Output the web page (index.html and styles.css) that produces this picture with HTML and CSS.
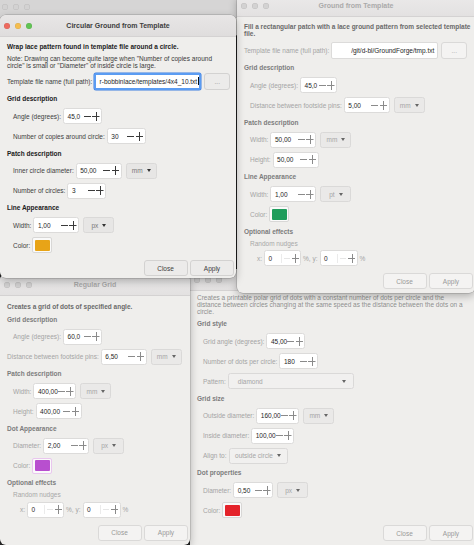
FILE: index.html
```html
<!DOCTYPE html>
<html lang="en">
<head>
    <meta charset="UTF-8">
    <title>Bobbin lace dialogs</title>
    <link rel="stylesheet" href="styles.css">
</head>
<body>

<!-- window far behind, only its title strip shows -->
<div class="win back">
    <div class="tbar"><span class="lights"><i></i><i></i><i></i></span><span></span></div>
</div>

<!-- polar grid -->
<div class="win win-d">
    <div class="tbar"><span class="lights"><i></i><i></i><i></i></span><span>Polar Grid</span></div>
    <div class="body">
        <p class="info">Creates a printable polar grid of dots with a constant number of dots per circle and the<br>distance between circles changing at the same speed as the distance between the dots on a<br>circle.</p>
        <p class="hd">Grid style</p>
        <div class="row"><span class="lbl">Grid angle (degrees):</span><span class="spin w39"><span class="v">45,00</span><i class="pm"></i></span></div>
        <div class="row"><span class="lbl">Number of dots per circle:</span><span class="spin w39"><span class="v">180</span><i class="pm"></i></span></div>
        <div class="row"><span class="lbl">Pattern:</span><span class="dd combo">diamond</span></div>
        <p class="hd">Grid size</p>
        <div class="row"><span class="lbl">Outside diameter:</span><span class="spin w43"><span class="v">160,00</span><i class="pm"></i></span><span class="dd">mm</span></div>
        <div class="row"><span class="lbl">Inside diameter:</span><span class="spin w43"><span class="v">100,00</span><i class="pm"></i></span></div>
        <div class="row"><span class="lbl">Align to:</span><span class="dd align">outside circle</span></div>
        <p class="hd">Dot properties</p>
        <div class="row"><span class="lbl">Diameter:</span><span class="spin w40"><span class="v">0,50</span><i class="pm"></i></span><span class="dd">px</span></div>
        <div class="row"><span class="lbl">Color:</span><span class="sw"><i class="red"></i></span></div>
        <div class="foot"><span class="btn">Close</span><span class="btn">Apply</span></div>
    </div>
</div>

<!-- regular grid -->
<div class="win win-c">
    <div class="tbar"><span class="lights"><i></i><i></i><i></i></span><span>Regular Grid</span></div>
    <div class="body">
        <p class="desc">Creates a grid of dots of specified angle.</p>
        <p class="hd">Grid description</p>
        <div class="row"><span class="lbl">Angle (degrees):</span><span class="spin w39"><span class="v">60,0</span><i class="pm"></i></span></div>
        <div class="row flush"><span class="lbl">Distance between footside pins:</span><span class="spin w46"><span class="v">6,50</span><i class="pm"></i></span><span class="dd">mm</span></div>
        <p class="hd">Patch description</p>
        <div class="row"><span class="lbl">Width:</span><span class="spin w43"><span class="v">400,00</span><i class="pm"></i></span><span class="dd">mm</span></div>
        <div class="row"><span class="lbl">Height:</span><span class="spin w46"><span class="v">400,00</span><i class="pm"></i></span></div>
        <p class="hd">Dot Appearance</p>
        <div class="row"><span class="lbl">Diameter:</span><span class="spin w46"><span class="v">2,00</span><i class="pm"></i></span><span class="dd">px</span></div>
        <div class="row"><span class="lbl">Color:</span><span class="sw pink"><i class="purple"></i></span></div>
        <p class="hd">Optional effects</p>
        <p class="sub">Random nudges</p>
        <div class="row nudge"><span class="lbl">x:</span><span class="spin w37"><span class="v">0</span><i class="pm dis"></i></span><span class="lbl">%, y:</span><span class="spin w38"><span class="v">0</span><i class="pm dis"></i></span><span class="lbl">%</span></div>
        <div class="foot"><span class="btn">Close</span><span class="btn">Apply</span></div>
    </div>
</div>

<!-- ground from template -->
<div class="win win-b">
    <div class="tbar"><span class="lights"><i></i><i></i><i></i></span><span>Ground from Template</span></div>
    <div class="body">
        <p class="desc">Fill a rectangular patch with a lace ground pattern from selected template<br>file.</p>
        <div class="row flush file"><span class="lbl">Template file name (full path):</span><span class="path">/git/d-bl/GroundForge/tmp.txt</span><span class="btn more">...</span></div>
        <p class="hd">Grid description</p>
        <div class="row"><span class="lbl">Angle (degrees):</span><span class="spin w37"><span class="v">45,0</span><i class="pm"></i></span></div>
        <div class="row"><span class="lbl">Distance between footside pins:</span><span class="spin w46"><span class="v">5,00</span><i class="pm"></i></span><span class="dd">mm</span></div>
        <p class="hd">Patch description</p>
        <div class="row"><span class="lbl">Width:</span><span class="spin w46"><span class="v">50,00</span><i class="pm"></i></span><span class="dd">mm</span></div>
        <div class="row"><span class="lbl">Height:</span><span class="spin w46"><span class="v">50,00</span><i class="pm"></i></span></div>
        <p class="hd">Line Appearance</p>
        <div class="row"><span class="lbl">Width:</span><span class="spin w46"><span class="v">1,00</span><i class="pm"></i></span><span class="dd">pt</span></div>
        <div class="row"><span class="lbl">Color:</span><span class="sw"><i class="green"></i></span></div>
        <p class="hd">Optional effects</p>
        <p class="sub">Random nudges</p>
        <div class="row nudge"><span class="lbl">x:</span><span class="spin w37"><span class="v">0</span><i class="pm dis"></i></span><span class="lbl">%, y:</span><span class="spin w38"><span class="v">0</span><i class="pm dis"></i></span><span class="lbl">%</span></div>
        <div class="foot"><span class="btn">Close</span><span class="btn">Apply</span></div>
    </div>
</div>

<!-- circular ground, the active one -->
<div class="win win-a active">
    <div class="tbar"><span class="lights"><i></i><i></i><i></i></span><span>Circular Ground from Template</span></div>
    <div class="body">
        <p class="desc">Wrap lace pattern found in template file around a circle.</p>
        <p class="note">Note: Drawing can become quite large when "Number of copies around<br>circle" is small or "Diameter" of inside circle is large.</p>
        <div class="row flush file"><span class="lbl">Template file name (full path):</span><span class="path focus">r-bobbinlace/templates/4x4_10.txt</span><span class="btn more">...</span></div>
        <p class="hd">Grid description</p>
        <div class="row"><span class="lbl">Angle (degrees):</span><span class="spin w39"><span class="v">45,0</span><i class="pm"></i></span></div>
        <div class="row"><span class="lbl">Number of copies around circle:</span><span class="spin w39"><span class="v">30</span><i class="pm"></i></span></div>
        <p class="hd">Patch description</p>
        <div class="row"><span class="lbl">Inner circle diameter:</span><span class="spin w46"><span class="v">50,00</span><i class="pm"></i></span><span class="dd">mm</span></div>
        <div class="row"><span class="lbl">Number of circles:</span><span class="spin w39"><span class="v">3</span><i class="pm"></i></span></div>
        <p class="hd">Line Appearance</p>
        <div class="row"><span class="lbl">Width:</span><span class="spin w46"><span class="v">1,00</span><i class="pm"></i></span><span class="dd">px</span></div>
        <div class="row"><span class="lbl">Color:</span><span class="sw"><i class="orange"></i></span></div>
        <div class="foot"><span class="btn">Close</span><span class="btn">Apply</span></div>
    </div>
</div>

</body>
</html>
```

FILE: styles.css
```css
* {
    box-sizing: border-box;
}
body {
    margin: 0;
    width: 474px;
    height: 545px;
    overflow: hidden;
    position: relative;
    background: #2a2a2a;
    font-family: "Liberation Sans", Arial, sans-serif;
    font-size: 6.5px;
    color: #333;
}
p {
    margin: 0;
}

/* windows */
.win {
    position: absolute;
    background: #efeeec;
    border-radius: 6px;
    overflow: hidden;
    box-shadow: 0 0 0 0.5px rgba(0, 0, 0, 0.22), 0 3px 9px rgba(0, 0, 0, 0.28);
}
.back {
    left: -2px;
    top: -4px;
    width: 242px;
    height: 40px;
    z-index: 1;
}
.back .tbar {
    background: #d6d5d5;
}
.win-d {
    left: 190px;
    top: 269px;
    width: 285px;
    height: 285px;
    z-index: 2;
}
.win-c {
    left: 0;
    top: 274px;
    width: 190px;
    height: 271px;
    z-index: 3;
}
.win-b {
    left: 237px;
    top: -5px;
    width: 238px;
    height: 298px;
    z-index: 4;
}
.win-a {
    left: 0;
    top: 15px;
    width: 236px;
    height: 263px;
    z-index: 5;
}

/* title bar */
.tbar {
    height: 22px;
    display: grid;
    grid-template-columns: 1fr auto 1fr;
    align-items: center;
    background: linear-gradient(#ebeaea, #e3e1e1);
    border-bottom: 0.5px solid #d4d2d2;
    font-size: 7px;
    font-weight: bold;
    color: #aaa;
}
.active .tbar {
    background: linear-gradient(#e8e6e6, #dfdddd);
    color: #3e3e3e;
}
.lights {
    display: flex;
    gap: 5px;
    padding-left: 4px;
}
.lights i {
    width: 6px;
    height: 6px;
    border-radius: 50%;
    background: #d3d2d2;
    box-shadow: inset 0 0 0 0.5px rgba(0, 0, 0, 0.1);
}
.active .lights i:nth-child(1) { background: #ee6a5f; }
.active .lights i:nth-child(2) { background: #f5bd4f; }
.active .lights i:nth-child(3) { background: #61c454; }

/* dialog body */
.body {
    padding: 5.5px 2px 0 7px;
    line-height: 7px;
}
.win-c .body {
    padding-top: 7px;
}
.win-d .body {
    padding-top: 2.5px;
}
.desc {
    font-weight: bold;
    color: #6a6a6a;
}
.info {
    color: #8e8e8e;
}
.note {
    margin-top: 5px;
    color: #3a3a3a;
}
.hd {
    margin-top: 5.5px;
    font-weight: bold;
    color: #7c7c7c;
}
.sub {
    margin-top: 5px;
    padding-left: 6px;
    color: #a8a8a8;
}
.lbl {
    color: #a4a4a4;
    white-space: nowrap;
}
.active .desc { color: #1b1b1b; }
.active .hd { color: #202020; }
.active .lbl { color: #3e3e3e; }

.row {
    display: flex;
    align-items: center;
    gap: 2px;
    height: 16px;
    margin-top: 4px;
    padding-left: 6px;
}
.hd + .row {
    margin-top: 6px;
}
.row.flush {
    padding-left: 0;
}
.row.file {
    height: 17px;
    gap: 2px;
}
.desc + .row.file {
    margin-top: 5px;
}
.row.nudge {
    padding-left: 13px;
    margin-top: 3.5px;
    gap: 2px;
}

/* spin boxes */
.spin {
    display: flex;
    align-items: center;
    height: 16px;
    background: #fff;
    border: 1px solid #dcdbda;
    border-radius: 2.5px;
}
.spin .v {
    flex: 1;
    padding-left: 3.5px;
    color: #1e1e1e;
}
.w37 { width: 37px; }
.w38 { width: 38px; }
.w39 { width: 39px; }
.w40 { width: 40px; }
.w43 { width: 43px; }
.w46 { width: 46px; }

.pm {
    width: 16px;
    height: 9px;
    margin-right: 1.5px;
    background:
        linear-gradient(#8a8a8a, #8a8a8a) 0 4px / 7px 1px no-repeat,
        linear-gradient(#8a8a8a, #8a8a8a) 8.5px 4px / 7.5px 1px no-repeat,
        linear-gradient(#8a8a8a, #8a8a8a) 12px 0 / 1px 9px no-repeat;
}
.active .pm {
    background:
        linear-gradient(#3a3a3a, #3a3a3a) 0 4px / 7px 1px no-repeat,
        linear-gradient(#3a3a3a, #3a3a3a) 8.5px 4px / 7.5px 1px no-repeat,
        linear-gradient(#3a3a3a, #3a3a3a) 12px 0 / 1px 9px no-repeat;
}
.pm.dis {
    border-left: 0.5px solid #ebebeb;
    width: 18px;
    padding-left: 2px;
    background:
        linear-gradient(#e6e6e6, #e6e6e6) 2px 4px / 6px 1px no-repeat,
        linear-gradient(#8a8a8a, #8a8a8a) 10px 4px / 7.5px 1px no-repeat,
        linear-gradient(#8a8a8a, #8a8a8a) 13.5px 0 / 1px 9px no-repeat;
}

/* drop downs */
.dd {
    display: flex;
    align-items: center;
    justify-content: center;
    gap: 4px;
    width: 31px;
    height: 16px;
    margin-left: 2px;
    background: #eae9e8;
    border: 1px solid #dad9d8;
    border-radius: 2.5px;
    color: #a5a5a5;
}
.active .dd {
    background: #e7e6e5;
    color: #777;
}
.dd::after {
    content: "";
    border-left: 2.5px solid transparent;
    border-right: 2.5px solid transparent;
    border-top: 3px solid #666;
}
.active .dd::after {
    border-top-color: #333;
}
.dd.combo {
    width: 126px;
    margin-left: 0;
    justify-content: space-between;
    padding: 0 7px 0 9px;
    background: #f1f0ef;
}
.dd.align {
    width: 59px;
    margin-left: 0;
    background: #f1f0ef;
}

/* file path */
.path {
    display: flex;
    align-items: center;
    justify-content: flex-end;
    width: 107px;
    height: 17px;
    padding-right: 3px;
    overflow: hidden;
    white-space: nowrap;
    background: #fff;
    border: 1px solid #dcdbda;
    border-radius: 2px;
    color: #1e1e1e;
}
.path.focus {
    border: 2px solid #5b9cf2;
    box-shadow: 0 0 0 0.5px #3f7fe0;
    padding-right: 1px;
}
.path.focus::after {
    content: "";
    width: 0.6px;
    height: 8px;
    margin-left: 0.5px;
    background: #111;
}

/* buttons */
.btn {
    display: flex;
    align-items: center;
    justify-content: center;
    width: 44px;
    height: 16px;
    background: #f4f3f2;
    border: 1px solid #dad9d8;
    border-radius: 3px;
    color: #999;
}
.active .btn {
    background: #ecebea;
    border-color: #d3d2d1;
    color: #3c3c3c;
}
.btn.more {
    width: 26px;
    height: 17px;
    margin-left: 1px;
    color: #aaa;
}
.active .btn.more {
    color: #999;
}
.foot {
    display: flex;
    justify-content: flex-end;
    gap: 2.5px;
    margin-top: 7px;
}

/* colour swatches */
.sw {
    width: 20px;
    height: 16px;
    padding: 1.5px;
    background: #fafafa;
    border: 1px solid #d8d7d6;
    border-radius: 2px;
}
.sw.pink {
    border-color: #e9c6ee;
}
.sw i {
    display: block;
    height: 100%;
    border-radius: 1px;
}
.orange { background: #e8a417; }
.green { background: #1f9d5c; }
.purple { background: #b84fcf; }
.red { background: #e4232a; }
```
